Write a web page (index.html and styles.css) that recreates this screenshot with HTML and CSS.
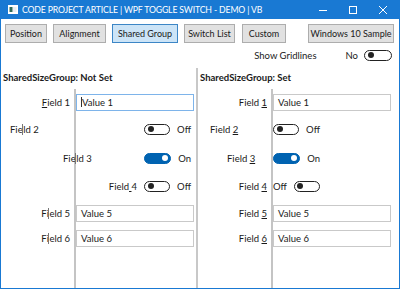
FILE: index.html
```html
<!DOCTYPE html>
<html lang="en">
<head>
  <meta charset="UTF-8">
  <title>WPF Toggle Switch - Demo</title>
  <link rel="stylesheet" href="styles.css">
</head>
<body>
  <div class="window">
    <!-- title bar -->
    <div class="titlebar">
      <svg class="app-icon" width="10" height="9" viewBox="0 0 10 9">
        <rect x="0.5" y="0.5" width="9" height="8" fill="#fff" stroke="#fff"/>
        <rect x="1.5" y="2" width="3" height="5" fill="#2f6b5a"/>
        <rect x="5" y="2" width="3.5" height="5" fill="#e8eef2"/>
      </svg>
      <span class="title">CODE PROJECT ARTICLE | WPF TOGGLE SWITCH - DEMO | VB</span>
      <div class="controls">
        <svg width="10" height="10" viewBox="0 0 10 10"><path d="M1 5.5h8" stroke="#fff" stroke-width="1"/></svg>
        <svg width="10" height="10" viewBox="0 0 10 10"><rect x="1.5" y="1.5" width="7" height="7" fill="none" stroke="#fff" stroke-width="1"/></svg>
        <svg width="10" height="10" viewBox="0 0 10 10"><path d="M1 1l8 8M9 1l-8 8" stroke="#fff" stroke-width="1"/></svg>
      </div>
    </div>

    <!-- tabs -->
    <div class="toolbar">
      <button class="btn w-pos">Position</button>
      <button class="btn w-align">Alignment</button>
      <button class="btn w-shared active">Shared Group</button>
      <button class="btn w-list">Switch List</button>
      <button class="btn w-custom">Custom</button>
      <button class="btn w-sample sample">Windows 10 Sample</button>
    </div>

    <div class="options">
      <span class="opt-label">Show Gridlines</span>
      <span class="opt-value">No</span>
      <span class="switch"></span>
    </div>

    <div class="panels">
      <!-- not shared -->
      <section class="panel">
        <h2>SharedSizeGroup: Not Set</h2>
        <div class="rows">
          <div class="row row-text">
            <span class="label"><span class="mark">F</span>ield 1</span>
            <span class="textbox focus"><span class="caret"></span>Value 1</span>
          </div>
          <div class="row row-left">
            <span class="label">Fie<span class="tick">l</span>d 2</span>
            <span class="switch-group"><span class="switch"></span>Off</span>
          </div>
          <div class="row row-mid">
            <span class="label">Fie<span class="tick">l</span>d 3</span>
            <span class="switch-group"><span class="switch on"></span>On</span>
          </div>
          <div class="row row-end">
            <span class="label">Field<u>&nbsp;</u>4</span>
            <span class="switch-group"><span class="switch"></span>Off</span>
          </div>
          <div class="row row-text">
            <span class="label">Fi<span class="tick">e</span>ld 5</span>
            <span class="textbox">Value 5</span>
          </div>
          <div class="row row-text">
            <span class="label">Fi<span class="tick">e</span>ld 6</span>
            <span class="textbox">Value 6</span>
          </div>
        </div>
      </section>

      <!-- shared -->
      <section class="panel">
        <h2>SharedSizeGroup: Set</h2>
        <div class="rows shared">
          <div class="row row-text">
            <span class="label">Field <u>1</u></span>
            <span class="textbox">Value 1</span>
          </div>
          <div class="row row-shared">
            <span class="label pad-2">Field <u>2</u></span>
            <span class="switch-group"><span class="switch"></span>Off</span>
          </div>
          <div class="row row-shared">
            <span class="label pad-3">Field <u>3</u></span>
            <span class="switch-group"><span class="switch on"></span>On</span>
          </div>
          <div class="row row-text">
            <span class="label">Field <u>4</u></span>
            <span class="switch-group">Off<span class="switch"></span></span>
          </div>
          <div class="row row-text">
            <span class="label">Field <u>5</u></span>
            <span class="textbox">Value 5</span>
          </div>
          <div class="row row-text">
            <span class="label">Field <u>6</u></span>
            <span class="textbox">Value 6</span>
          </div>
        </div>
      </section>
    </div>
  </div>
</body>
</html>
```

FILE: styles.css
```css
html, body {
  margin: 0;
  padding: 0;
  background: #fff;
}
body {
  font-family: Lato, sans-serif;
  font-size: 9.5px;
  color: #1a1a1a;
}
.window {
  width: 398px;
  height: 288px;
  border: 1px solid #1979d3;
  border-top: none;
  display: flex;
  flex-direction: column;
  overflow: hidden;
}
.titlebar {
  height: 19px;
  background: #1979d3;
  color: white;
  display: flex;
  align-items: center;
  padding-left: 7px;
}
.app-icon {
  margin-right: 4px;
}
.title {
  font-size: 8.7px;
  letter-spacing: -0.15px;
  white-space: nowrap;
}
.controls {
  margin-left: auto;
  display: flex;
  gap: 20px;
  padding-right: 11px;
}
.toolbar {
  display: flex;
  gap: 6px;
  padding: 5px 5px 0 4px;
}
.btn {
  height: 19px;
  padding: 0;
  background: #e1e1e1;
  border: 1px solid #adadad;
  font-family: inherit;
  font-size: 9px;
  color: #1a1a1a;
  white-space: nowrap;
  flex: none;
}
.w-pos { width: 42px; }
.w-align { width: 53px; }
.w-shared { width: 66px; }
.w-list { width: 51px; }
.w-custom { width: 44px; margin-left: 1px; }
.w-sample { width: 86px; }
.btn.active {
  background: #cce4f7;
  border-color: #3c86c6;
}
.btn.sample {
  margin-left: auto;
}
.options {
  display: flex;
  align-items: center;
  height: 16px;
  margin-top: 4px;
  padding-right: 7px;
  justify-content: flex-end;
}
.opt-label {
  margin-right: 29px;
}
.opt-value {
  margin-right: 6px;
}
.panels {
  flex: 1;
  display: grid;
  grid-template-columns: 197px 201px;
  margin-top: 5px;
}
.panel {
  border-right: 2px solid #c8c8c8;
  display: flex;
  flex-direction: column;
}
.panel:last-child {
  border-right: none;
}
.panel h2 {
  margin: 0;
  font-size: 9.5px;
  font-weight: bold;
  padding: 4px 2px 0;
  box-sizing: border-box;
  height: 21px;
}
.rows {
  flex: 1;
  display: grid;
  grid-template-rows: 26px 28px 30px 26px 29px 20px;
  align-content: start;
  background: linear-gradient(#c4c4c4, #c4c4c4) 73px 0 / 2px 100% no-repeat;
}
.row {
  display: flex;
  align-items: center;
}
.label {
  white-space: nowrap;
}
.row-text .label {
  width: 69px;
  text-align: right;
  margin-right: 6px;
}
.textbox {
  border: 1px solid #c9c9c9;
  display: flex;
  align-items: center;
  padding-left: 4px;
  box-sizing: border-box;
  width: 118px;
  height: 17px;
}
.textbox.focus {
  border-color: #7eb4ea;
}
.caret {
  width: 1px;
  height: 10px;
  background: #333;
}
.row-left .label {
  margin-left: 9px;
}
.row-mid .label {
  margin-left: 62px;
}
.row-left .switch-group,
.row-mid .switch-group {
  margin-left: auto;
  margin-right: 5px;
}
.row-shared .label {
  width: 75px;
  box-sizing: border-box;
}
.pad-2 {
  padding-left: 12px;
}
.pad-3 {
  padding-left: 29px;
}
.row-end {
  justify-content: flex-end;
  padding-right: 5px;
}
.row-end .label {
  margin-right: 7px;
}
.switch-group {
  display: flex;
  align-items: center;
  gap: 7px;
  width: 47px;
}
.switch {
  display: inline-block;
  position: relative;
  width: 26px;
  height: 9px;
  border: 1.5px solid #222;
  border-radius: 8px;
  background: #fff;
}
.switch::after {
  content: "";
  position: absolute;
  left: 2.5px;
  top: 1.5px;
  width: 6px;
  height: 6px;
  border-radius: 50%;
  background: #222;
}
.switch.on {
  background: #0063b1;
  border-color: #0063b1;
}
.switch.on::after {
  left: auto;
  right: 2.5px;
  background: #fff;
}
.tick {
  border-left: 1px solid #777;
  margin-left: -0.5px;
}
.mark {
  text-decoration: underline;
}
```
